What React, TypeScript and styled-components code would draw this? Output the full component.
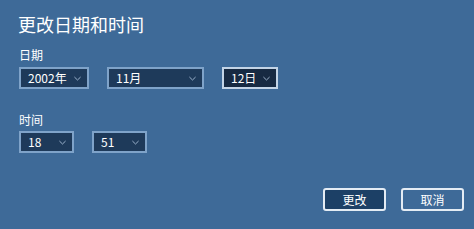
import React from "react";
import styled, { createGlobalStyle } from "styled-components";

const GlobalStyle = createGlobalStyle`
  html, body {
    margin: 0;
    padding: 0;
    background: #3e6a98;
  }
  body {
    font-family: "Noto Sans CJK SC", "Noto Sans", sans-serif;
    color: #ffffff;
  }
`;

const Dialog = styled.div`
  width: 474px;
  height: 229px;
  box-sizing: border-box;
  padding: 12px 10px 0 19px;
  display: flex;
  flex-direction: column;
`;

const Title = styled.h1`
  margin: 0 0 0 -1px;
  font-size: 18px;
  font-weight: 400;
  line-height: 24px;
`;

const Label = styled.div<{ $gap: number }>`
  margin-top: ${(p) => p.$gap}px;
  font-size: 12px;
  line-height: 16px;
`;

const Row = styled.div<{ $gap: number }>`
  margin-top: ${(p) => p.$gap}px;
  display: flex;
  gap: 18px;
`;

const Select = styled.div<{ $width: number; $focused?: boolean }>`
  width: ${(p) => p.$width}px;
  height: 22px;
  box-sizing: border-box;
  border: 2px solid ${(p) => (p.$focused ? "#c3d4e6" : "#7fa3c9")};
  background: ${(p) => (p.$focused ? "#172a42" : "#1e3a5a")};
  display: flex;
  align-items: center;
  justify-content: space-between;
  padding: 0 6px 0 7px;
  font-size: 12px;
  line-height: 16px;
`;

const Chevron = styled.svg`
  width: 7px;
  height: 5px;
  display: block;
`;

const Footer = styled.div`
  margin-top: 35px;
  display: flex;
  justify-content: flex-end;
  gap: 15px;
`;

const Button = styled.button<{ $primary?: boolean }>`
  width: 63px;
  height: 23px;
  box-sizing: border-box;
  border: 2px solid #e4ecf4;
  border-radius: 3px;
  background: ${(p) => (p.$primary ? "#1c4066" : "transparent")};
  color: #ffffff;
  font-family: inherit;
  font-size: 12px;
  line-height: 16px;
  padding: 0;
`;

const Arrow = () => (
  <Chevron viewBox="0 0 7 5">
    <polyline points="0.4,1 3.5,4 6.6,1" fill="none" stroke="#a9bfd8" strokeWidth="0.9" />
  </Chevron>
);

export default function App() {
  return (
    <>
      <GlobalStyle />
      <Dialog>
        <Title>更改日期和时间</Title>
        <Label $gap={11}>日期</Label>
        <Row $gap={4}>
          <Select $width={70}>
            <span>2002年</span>
            <Arrow />
          </Select>
          <Select $width={97}>
            <span>11月</span>
            <Arrow />
          </Select>
          <Select $width={56} $focused>
            <span>12日</span>
            <Arrow />
          </Select>
        </Row>
        <Label $gap={23}>时间</Label>
        <Row $gap={3}>
          <Select $width={55}>
            <span>18</span>
            <Arrow />
          </Select>
          <Select $width={55}>
            <span>51</span>
            <Arrow />
          </Select>
        </Row>
        <Footer>
          <Button $primary>更改</Button>
          <Button>取消</Button>
        </Footer>
      </Dialog>
    </>
  );
}
